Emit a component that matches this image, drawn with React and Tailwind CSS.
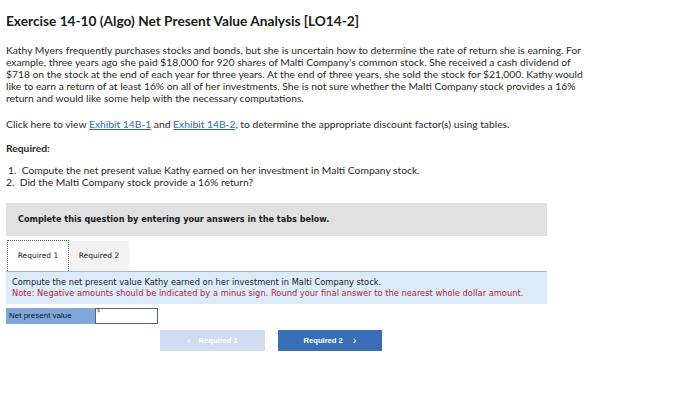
export default function App() {
  return (
    <div className="w-[700px] h-[408px] bg-white text-[#222] overflow-hidden">
      <div className="pl-[6px] pt-[12px] font-['Lato','Open_Sans',sans-serif]">
        <h1 className="text-[13.7px] font-bold leading-[17px] text-[#1a1a1a]">
          Exercise 14-10 (Algo) Net Present Value Analysis [LO14-2]
        </h1>
        <p className="mt-[15px] text-[10.3px] leading-[12px] whitespace-nowrap text-[#2a2a2a]">
          Kathy Myers frequently purchases stocks and bonds, but she is uncertain how to determine the rate of return she is earning. For<br />
          example, three years ago she paid $18,000 for 920 shares of Malti Company's common stock. She received a cash dividend of<br />
          $718 on the stock at the end of each year for three years. At the end of three years, she sold the stock for $21,000. Kathy would<br />
          like to earn a return of at least 16% on all of her investments. She is not sure whether the Malti Company stock provides a 16%<br />
          return and would like some help with the necessary computations.
        </p>
        <p className="mt-[14px] text-[10.3px] leading-[12px] text-[#2a2a2a]">
          Click here to view <span className="text-[#2f6cb5] underline">Exhibit 14B-1</span> and <span className="text-[#2f6cb5] underline">Exhibit 14B-2</span>, to determine the appropriate discount factor(s) using tables.
        </p>
        <p className="mt-[12px] text-[10.3px] leading-[12px] font-bold text-[#2a2a2a]">Required:</p>
        <div className="mt-[10px] text-[10.3px] leading-[12px] text-[#2a2a2a]">
          <div className="pl-[2px]">1. &nbsp;Compute the net present value Kathy earned on her investment in Malti Company stock.</div>
          <div>2. &nbsp;Did the Malti Company stock provide a 16% return?</div>
        </div>
      </div>
      <div className="mt-[15px] ml-[6px] w-[541px] font-['DejaVu_Sans','Verdana',sans-serif]">
        <div className="h-[33px] bg-[#e1e1e1] flex items-center pl-[12px] text-[8.15px] font-bold text-[#1a1a1a]">
          Complete this question by entering your answers in the tabs below.
        </div>
        <div className="mt-[4px] flex items-end h-[31px]">
          <div className="ml-[1px] w-[62px] h-[31px] bg-white border-t border-l border-r border-dotted border-[#666] flex items-center justify-center text-[7.5px] text-[#222]">
            Required 1
          </div>
          <div className="w-[60px] h-[30px] bg-[#f2f2f2] flex items-center justify-center text-[7.5px] text-[#222]">
            Required 2
          </div>
        </div>
        <div className="bg-[#dcebfa] border-t border-[#a9b4c0] h-[33px] pl-[6px] pt-[5px] text-[8.3px] leading-[11px]">
          <div className="text-[#1a1a1a]">Compute the net present value Kathy earned on her investment in Malti Company stock.</div>
          <div className="text-[#b0253a]">Note: Negative amounts should be indicated by a minus sign. Round your final answer to the nearest whole dollar amount.</div>
        </div>
        <div className="mt-[4px] flex h-[16px]">
          <div className="w-[89px] bg-[#7fa7dc] text-[8px] text-[#111] pl-[3px] flex items-center font-['Liberation_Sans',sans-serif]">Net present value</div>
          <div className="relative w-[63px] border border-[#56627a] bg-white">
            <span className="absolute left-[1px] top-[-2px] text-[5px] text-[#333]">$</span>
          </div>
        </div>
        <div className="mt-[6px] flex pl-[154px] gap-[13px]">
          <div className="w-[105px] h-[21px] bg-[#d0ddf0] flex items-center justify-center text-[7.6px] font-bold text-white font-['Liberation_Sans',sans-serif]">
            <span className="mr-[8px] text-[10px] font-normal">‹</span>Required 1
          </div>
          <div className="w-[104px] h-[21px] bg-[#3a6fb7] flex items-center justify-center text-[7.6px] font-bold text-white font-['Liberation_Sans',sans-serif]">
            Required 2<span className="ml-[10px] text-[11px] font-normal">›</span>
          </div>
        </div>
      </div>
    </div>
  );
}
